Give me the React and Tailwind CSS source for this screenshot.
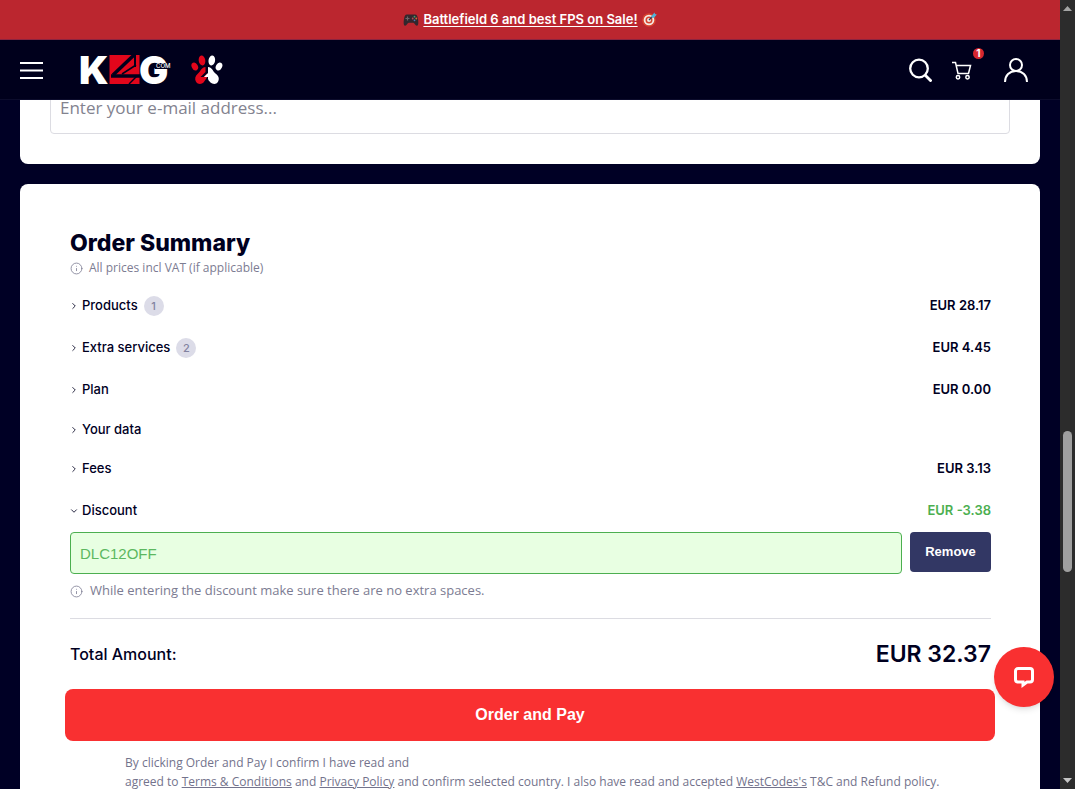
import { Info, ChevronRight, ChevronDown } from 'lucide-react';

const rows = [
  { label: 'Products', count: 1, value: 'EUR 28.17' },
  { label: 'Extra services', count: 2, value: 'EUR 4.45' },
  { label: 'Plan', value: 'EUR 0.00' },
  { label: 'Your data' },
  { label: 'Fees', value: 'EUR 3.13' },
  { label: 'Discount', value: 'EUR -3.38', open: true },
];

const Gamepad = () => (
  <svg width="16" height="14" viewBox="0 0 16 14" aria-hidden="true">
    <path
      d="M4 1.5h8c1.8 0 2.4 1.3 2.9 4 .5 2.800.9 6.800-.9 7.200-1.500.3-2.500-3-3.700-3H5.700c-1.200 0-2.200 3.300-3.700 3-1.800-.4-1.400-4.400-.9-7.200.5-2.700 1.100-4 2.900-4z"
      fill="#33272d"
    />
    <path d="M4.500 3.500v4M2.500 5.500h4" stroke="#6e6468" strokeWidth="1.200" />
    <circle cx="11.500" cy="3.700" r="0.900" fill="#3fa56b" />
    <circle cx="11.500" cy="7.300" r="0.900" fill="#4a79b8" />
    <circle cx="9.700" cy="5.500" r="0.900" fill="#b5495b" />
    <circle cx="13.300" cy="5.500" r="0.900" fill="#d56a3a" />
  </svg>
);

const Target = () => (
  <svg width="15" height="15" viewBox="0 0 15 15" aria-hidden="true">
    <circle cx="7" cy="8" r="6.800" fill="#d8432f" />
    <circle cx="7" cy="8" r="5.300" fill="#f3e9e4" />
    <circle cx="7" cy="8" r="3.500" fill="#d8432f" />
    <circle cx="7" cy="8" r="2" fill="#f3e9e4" />
    <path d="M7 8l5-5" stroke="#2b3c55" strokeWidth="1.300" />
    <path d="M9.500 4L12.500.5l.5 1.500 1.800.5L12 5.800l-2.500-.3z" fill="#4fb3d9" />
  </svg>
);

const Logo = () => (
  <svg width="90" height="30" viewBox="0 0 90 30" className="overflow-visible" role="img" aria-label="K4G.com">
    <g fill="#fff" fontFamily="Inter, sans-serif" fontWeight="900">
      <text x="-1" y="29" fontSize="39">K</text>
      <text x="59" y="29" fontSize="39">G</text>
    </g>
    <rect x="75" y="8" width="16" height="6" fill="#00001c" />
    <text x="76" y="13" fontSize="6" fontFamily="Inter, sans-serif" fontWeight="500" fill="#fff">COM</text>
    <path d="M29.500 0h30v29h-30z" fill="#e2061b" />
    <g stroke="#00001c" fill="none">
      <path d="M54 0L33 20" strokeWidth="3.500" />
      <path d="M31 21h29" strokeWidth="3.500" />
      <path d="M56 10L42 19" strokeWidth="1.500" />
      <path d="M49 29l8-8" strokeWidth="1.500" />
      <path d="M55 0v12" strokeWidth="2" />
    </g>
  </svg>
);

const Paw = () => (
  <svg width="32" height="30" viewBox="0 0 32 30" aria-hidden="true">
    <g fill="#e2061b">
      <ellipse cx="3.800" cy="11.500" rx="3" ry="4.200" transform="rotate(-28 3.800 11.500)" />
      <ellipse cx="11" cy="5.500" rx="3.300" ry="5" transform="rotate(-8 11 5.500)" />
      <path d="M14.500 12c-4 0-4.500 4-7.500 6.500C4 21 3.500 24 5 26.800c1.800 3 6 2.500 7.500.7l3.500-5v-4l-3.500 3.500h-3l5-5z" />
    </g>
    <g fill="#fff">
      <ellipse cx="20.800" cy="5.500" rx="3.300" ry="5" transform="rotate(8 20.800 5.500)" />
      <ellipse cx="28" cy="11.500" rx="3" ry="4.200" transform="rotate(28 28 11.500)" />
      <path d="M17 12c4 0 4.500 4 7.500 6.500 3.500 2.500 4 5.500 2.500 8.300-1.800 3-5.500 2.400-7.500.7-1.500-1.500-3-3-2.500-5.500h-4l4-4z" />
    </g>
  </svg>
);

const ScrollBar = () => (
  <div className="flex w-[15px] shrink-0 flex-col items-center bg-[#2c2c2c] py-[6px]" aria-hidden="true">
    <svg width="9" height="5" viewBox="0 0 9 5"><path d="M0 5L4.500 0 9 5z" fill="#a5a5a5" /></svg>
    <div className="grow-[420]" />
    <div className="h-[141px] w-[9px] rounded-full bg-[#9f9f9f]" />
    <div className="grow-[206]" />
    <svg width="9" height="5" viewBox="0 0 9 5"><path d="M0 0l4.500 5L9 0z" fill="#c5c5c5" /></svg>
  </div>
);

const Header = () => (
  <header className="relative z-10 shrink-0">
    <div className="flex h-10 items-center justify-center gap-1 border-b border-[#8c2440] bg-[#bb262f] text-white">
      <Gamepad />
      <a href="#sale" className="text-[13px] font-semibold underline underline-offset-2">
        Battlefield 6 and best FPS on Sale!
      </a>
      <Target />
    </div>
    <div className="flex h-[60px] items-center border-b border-[#0c0c2c] bg-[#00001c] pr-8 pl-5">
      <button aria-label="Menu" className="mr-9">
        <svg width="24" height="18" viewBox="0 0 24 18" stroke="#fff" strokeWidth="2">
          <path d="M0 2h23M0 9.500h23M0 17h23" />
        </svg>
      </button>
      <a href="#home"><Logo /></a>
      <a href="#pets" aria-label="Charity" className="ml-[21px]"><Paw /></a>
      <nav className="ml-auto flex items-center">
        <button aria-label="Search">
          <svg width="24" height="24" viewBox="0 0 24 24" fill="none" stroke="#fff" strokeWidth="2.300">
            <circle cx="11" cy="10.500" r="8.800" />
            <path d="M17 17l6.500 6.500" strokeWidth="2.800" />
          </svg>
        </button>
        <button aria-label="Cart" className="relative ml-5">
          <svg width="20" height="20" viewBox="0 0 20 20" fill="none" stroke="#fff" strokeWidth="1.500">
            <path d="M0 2.500h3.500l2.500 11h10.500l2-8H4.500" />
            <circle cx="6" cy="17.300" r="1.700" />
            <circle cx="15.500" cy="17.300" r="1.700" />
          </svg>
          <span className="absolute -top-3 -right-3 flex size-[11px] items-center justify-center rounded-full bg-[#d6262f] text-[10px] font-bold text-white">
            1
          </span>
        </button>
        <button aria-label="Account" className="ml-8">
          <svg width="24" height="24" viewBox="0 0 24 24" fill="none" stroke="#fff" strokeWidth="2">
            <circle cx="12" cy="7" r="6" />
            <path d="M1 24c0-6.500 4.500-11 11-11s11 4.500 11 11" />
          </svg>
        </button>
      </nav>
    </div>
  </header>
);

const SummaryRow = ({ label, count, value, open }) => {
  const Arrow = open ? ChevronDown : ChevronRight;
  return (
    <div className={`flex items-center justify-between ${value ? 'h-[42px]' : 'h-[37px]'}`}>
      <button className="flex items-center text-[13px] font-medium" aria-expanded={Boolean(open)}>
        <Arrow size={10} strokeWidth={2} className="mr-[2px] -ml-px" />
        <span className="ml-px">{label}</span>
        {count && (
          <span className="ml-[6px] flex size-5 items-center justify-center rounded-full bg-[#dcdce8] text-[11px] text-[#8282a0]">
            {count}
          </span>
        )}
      </button>
      {value && (
        <span className={`text-[13px] font-semibold ${open ? 'text-[#4caf50]' : ''}`}>{value}</span>
      )}
    </div>
  );
};

const OrderSummary = () => (
  <section className="mt-5 grow rounded-t-lg bg-white pt-11 pr-[49px] pl-[50px]">
    <h2 className="text-[23px] leading-[30px] font-extrabold">Order Summary</h2>
    <p className="flex h-5 items-center gap-[6px] font-['Open_Sans',sans-serif] text-[12px] text-[#7c7c92]">
      <Info size={13} strokeWidth={1.5} />
      All prices incl VAT (if applicable)
    </p>
    <div className="mt-[7px]">
      {rows.map((row) => (
        <SummaryRow key={row.label} {...row} />
      ))}
    </div>
    <div className="flex items-start gap-2">
      <input
        type="text"
        aria-label="Discount code"
        defaultValue="DLC12OFF"
        className="h-[42px] min-w-0 grow rounded border border-[#4caf50] bg-[#e8ffe2] px-[9px] font-['Liberation_Sans',sans-serif] text-[15px] text-[#5cb860] outline-none"
      />
      <button className="h-10 w-[81px] rounded bg-[#323764] font-['Liberation_Sans',sans-serif] text-[13px] font-bold text-white">
        Remove
      </button>
    </div>
    <p className="mt-2 flex h-[18px] items-center gap-[7px] font-['Open_Sans',sans-serif] text-[13px] text-[#7c7c92]">
      <Info size={13} strokeWidth={1.5} />
      While entering the discount make sure there are no extra spaces.
    </p>
    <div className="mt-[18px] flex h-[71px] items-center justify-between border-t border-[#dcdce2]">
      <span className="text-[16px] font-medium">Total Amount:</span>
      <span className="text-[23px] font-semibold">EUR 32.37</span>
    </div>
    <div className="-mr-1 -ml-[5px]">
      <button className="h-[52px] w-full rounded-lg bg-[#f93031] font-['Liberation_Sans',sans-serif] text-[16px] font-bold text-white">
        Order and Pay
      </button>
    </div>
    <p className="mt-3 pl-[55px] font-['Open_Sans',sans-serif] text-[12px] leading-[19px] text-[#73738c]">
      By clicking Order and Pay I confirm I have read and
      <br />
      agreed to <a href="#terms" className="underline">Terms &amp; Conditions</a> and{' '}
      <a href="#privacy" className="underline">Privacy Policy</a> and confirm selected country. I also
      have read and accepted <a href="#westcodes" className="underline">WestCodes's</a> T&amp;C and Refund
      policy.
    </p>
  </section>
);

const App = () => {
  return (
    <div className="flex h-screen overflow-hidden bg-[#000025] font-['Inter',sans-serif] text-[#00001f]">
      <div className="relative flex min-w-0 grow flex-col">
        <Header />
        {/* the page is scrolled, so the e-mail box runs under the header */}
        <main className="-mt-5 flex grow flex-col px-5">
          <section className="rounded-b-lg bg-white px-[30px] pb-[30px]">
            <input
              type="email"
              aria-label="E-mail address"
              placeholder="Enter your e-mail address..."
              className="block h-[54px] w-full rounded border border-[#dcdce2] px-[9px] font-['Open_Sans',sans-serif] text-[17px] outline-none placeholder:text-[#83838f]"
            />
          </section>
          <OrderSummary />
        </main>
        <button
          aria-label="Open chat"
          className="absolute right-[6px] bottom-[82px] z-20 flex size-[60px] items-center justify-center rounded-full bg-[#f93031] shadow-md"
        >
          <svg width="22" height="22" viewBox="0 0 22 22" fill="none" stroke="#fff" strokeWidth="3">
            <path d="M5 2.500h12a2.500 2.500 0 0 1 2.500 2.500v8.500a2.500 2.500 0 0 1-2.500 2.500h-3l-4 3v-3H5A2.500 2.500 0 0 1 2.500 13.500V5A2.500 2.500 0 0 1 5 2.500z" />
          </svg>
        </button>
      </div>
      <ScrollBar />
    </div>
  );
};

export default App;
